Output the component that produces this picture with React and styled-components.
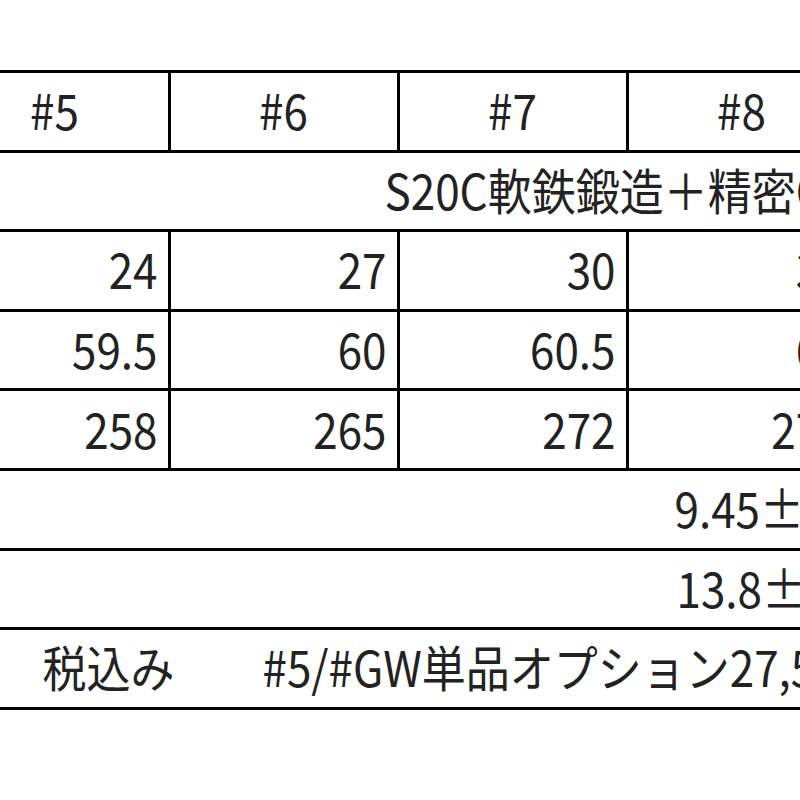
import styled, { createGlobalStyle } from "styled-components";

const GlobalStyle = createGlobalStyle`
  body {
    margin: 0;
    background: #fff;
  }
`;

const clubs = ["#5", "#6", "#7", "#8", "#9", "PW", "GW"];

const specs = [
  { label: "ロフト角(°)", values: ["24", "27", "30", "33", "37", "42", "47"] },
  { label: "ライ角(°)", values: ["59.5", "60", "60.5", "61", "61.5", "62", "62.5"] },
  { label: "ヘッド重量(g)", values: ["258", "265", "272", "279", "286", "293", "300"] },
];

const spans = [
  { label: "素材", text: "S20C軟鉄鍛造＋精密CNCミーリング", indent: 443 },
];

const tail = [
  { label: "ソール幅(mm)", text: "9.45±0.5mm", indent: 733 },
  { label: "ブレード長(mm)", text: "13.8±0.5mm", indent: 735 },
  {
    label: "価格",
    text: "税込み\u3000\u3000#5/#GW単品オプション27,500円（税込み）",
    indent: 101,
  },
];

export default function App() {
  return (
    <Frame>
      <GlobalStyle />
      <SpecTable>
        <colgroup>
          <col style={{ width: 200 }} />
          {clubs.map((c) => (
            <col key={c} style={{ width: 229 }} />
          ))}
        </colgroup>
        <tbody>
          <tr>
            <Label>番手</Label>
            {clubs.map((c) => (
              <Head key={c}>
                <Text>{c}</Text>
              </Head>
            ))}
          </tr>
          {spans.map((s) => (
            <tr key={s.label}>
              <Label>{s.label}</Label>
              <Wide colSpan={clubs.length} $indent={s.indent}>
                <Text>{s.text}</Text>
              </Wide>
            </tr>
          ))}
          {specs.map((row) => (
            <tr key={row.label}>
              <Label>{row.label}</Label>
              {row.values.map((v, i) => (
                <Num key={i}>
                  <Text>{v}</Text>
                </Num>
              ))}
            </tr>
          ))}
          {tail.map((s) => (
            <tr key={s.label}>
              <Label>{s.label}</Label>
              <Wide colSpan={clubs.length} $indent={s.indent}>
                <Text>{s.text}</Text>
              </Wide>
            </tr>
          ))}
        </tbody>
      </SpecTable>
    </Frame>
  );
}

const Frame = styled.div`
  width: 800px;
  height: 800px;
  overflow: hidden;
  background: #fff;
`;

const SpecTable = styled.table`
  border-collapse: collapse;
  table-layout: fixed;
  width: 1803px;
  margin: 70px 0 0 -261.5px;
  font-family: "Noto Sans CJK JP", "Noto Sans", sans-serif;
  font-size: 44px;
  color: #222;

  td {
    border: 3px solid #000;
    height: 76.6px;
    padding: 0;
    white-space: nowrap;
    overflow: hidden;
  }
`;

const Text = styled.span`
  display: inline-block;
  transform: translateY(-2px) scaleY(1.12);
`;

const Label = styled.td`
  text-align: center;
`;

const Head = styled.td`
  text-align: center;
`;

const Num = styled.td`
  text-align: right;
  && {
    padding-right: 10px;
  }
`;

const Wide = styled.td`
  text-align: left;
  && {
    padding-left: ${(p) => p.$indent}px;
  }
`;
